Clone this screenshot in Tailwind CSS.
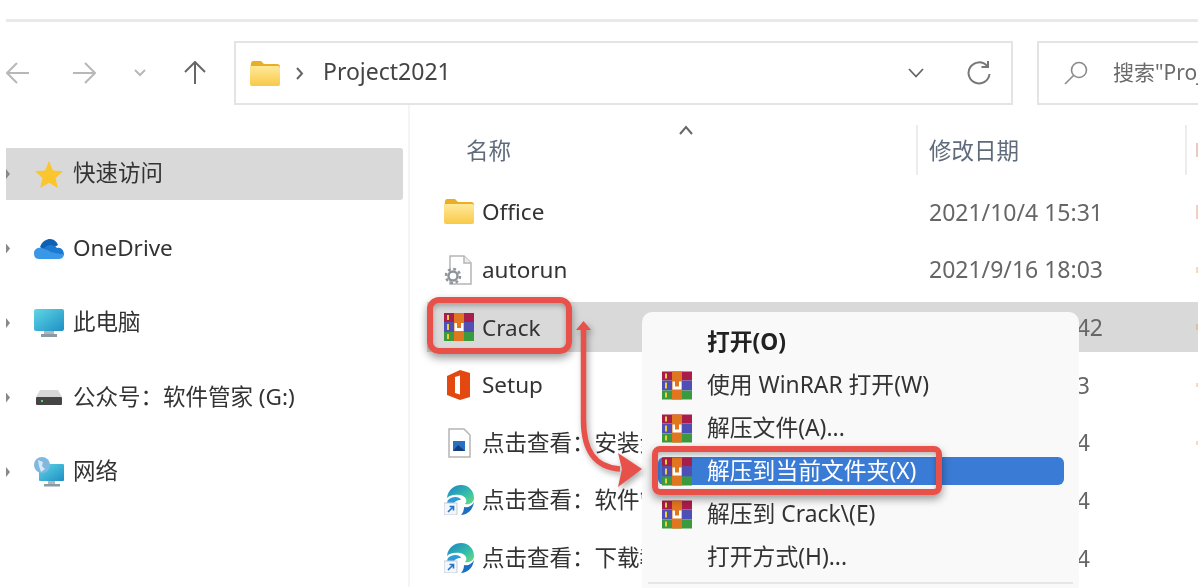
<!DOCTYPE html>
<html lang="zh-CN">
<head>
    <meta charset="UTF-8">
    <title>Project2021</title>
    <script src="https://cdn.jsdelivr.net/npm/@tailwindcss/browser@4"></script>
</head>
<body class="bg-white">
    <!-- shared icons -->
    <svg class="absolute w-0 h-0">
        <defs>
            <linearGradient id="folderFill" x1="0" y1="0" x2="0" y2="1"><stop offset="0" stop-color="#ffe99a"/><stop offset="1" stop-color="#f8c948"/></linearGradient>
            <linearGradient id="screenFill" x1="0" y1="0" x2="1" y2="1"><stop offset="0" stop-color="#5fd6e6"/><stop offset="1" stop-color="#1f8fc4"/></linearGradient>
            <linearGradient id="edgeFill" x1="0" y1="0" x2="1" y2="1"><stop offset="0" stop-color="#1c7fc9"/><stop offset="0.6" stop-color="#35bfa8"/><stop offset="1" stop-color="#6fdc7c"/></linearGradient>
            <symbol id="folder" viewBox="0 0 30 25">
                <path d="M1 2.500Q1 0 3 0H11L14 3H27Q30 3 30 6V10H0Z" fill="#e9ae22"/>
                <rect x="0" y="5" width="30" height="20" rx="2" fill="url(#folderFill)"/>
            </symbol>
            <symbol id="rar" viewBox="0 0 30 28">
                <rect x="0" y="0" width="30" height="9" fill="#a81d4a"/>
                <rect x="0" y="9" width="30" height="10" fill="#4f4fb5"/>
                <rect x="0" y="19" width="30" height="9" fill="#3c9a3e"/>
                <rect x="10" y="0" width="10" height="28" fill="#e0761f"/>
                <rect x="3" y="2" width="2" height="5" fill="#e8d23a"/>
                <rect x="3" y="11" width="2" height="6" fill="#e8d23a"/>
                <rect x="3" y="21" width="2" height="5" fill="#e8d23a"/>
                <path d="M10.500 10H13V15H17V10H19.500V18H10.500Z" fill="#fff"/>
            </symbol>
            <symbol id="edge" viewBox="0 0 30 30">
                <path d="M3 13C4 4 11 0 17 0C25 0 30 6 30 13C30 18 25 20 21 19C24 16 22 11 16 10C9 9 5 11 3 13Z" fill="url(#edgeFill)"/>
                <path d="M30 17C29 25 23 30 17 30C19 28 20 25 20 22C24 23 28 21 30 17Z" fill="#1a6fc0"/>
                <path d="M7 13C11 11 16 12 17 15C13 15 10 17 10 19H3C3 16 4 14 7 13Z" fill="#2f9ad8"/>
                <rect x="0" y="18" width="13" height="12" fill="#f3f6fa" stroke="#c5ccd4"/>
                <path d="M4 27L9 22M5.500 21.500H9.500V25.500" fill="none" stroke="#2374c6" stroke-width="1.600"/>
            </symbol>
        </defs>
    </svg>

    <div class="relative w-[1200px] h-[588px] overflow-hidden bg-white pl-[6px] pr-[2px] pt-[19px] blur-[0.7px] text-[#333] text-[22.500px] font-['Noto_Sans','Noto_Sans_CJK_SC',sans-serif]">
        <div class="h-[3px] bg-[#e9e9e9]"></div>

        <!-- toolbar -->
        <div class="flex items-center h-[64px] mt-[19px]">
            <div class="flex items-center w-[228px] shrink-0 pl-0">
                <svg class="w-[24px] h-[24px] text-[#b8b8b8]" viewBox="0 0 24 24" fill="none" stroke="currentColor" stroke-width="2"><path d="M23 12H1M11 2L1 12L11 22"/></svg>
                <svg class="w-[24px] h-[24px] ml-[42px] text-[#b8b8b8]" viewBox="0 0 24 24" fill="none" stroke="currentColor" stroke-width="2"><path d="M1 12H23M13 2L23 12L13 22"/></svg>
                <svg class="w-[12px] h-[8px] ml-[38px] text-[#b8b8b8]" viewBox="0 0 12 8" fill="none" stroke="currentColor" stroke-width="2"><path d="M1 1L6 6L11 1"/></svg>
                <svg class="w-[24px] h-[24px] ml-[37px] text-[#666]" viewBox="0 0 24 24" fill="none" stroke="currentColor" stroke-width="2"><path d="M12 23V1M2 11L12 1L22 11"/></svg>
            </div>
            <div class="flex items-center w-[779px] h-full border-2 border-[#e4e4e4] pl-[14px] pr-[20px]">
                <svg class="w-[30px] h-[25px]"><use href="#folder"/></svg>
                <svg class="w-[9px] h-[13px] ml-[15px] text-[#666]" viewBox="0 0 9 13" fill="none" stroke="currentColor" stroke-width="2"><path d="M2 1L7 6.500L2 12"/></svg>
                <span class="ml-[19px] -mt-[4px] text-[23px] text-[#444]">Project2021</span>
                <svg class="w-[16px] h-[10px] ml-auto text-[#666]" viewBox="0 0 16 10" fill="none" stroke="currentColor" stroke-width="1.800"><path d="M1 1L8 8.500L15 1"/></svg>
                <svg class="w-[24px] h-[24px] ml-[43px] text-[#777]" viewBox="0 0 24 24" fill="none" stroke="currentColor" stroke-width="2"><path d="M20 5A10.500 10.500 0 1 0 22.500 13"/><path d="M14.500 6H21V0" /></svg>
            </div>
            <div class="flex items-center flex-1 h-full ml-[24px] border-2 border-r-0 border-[#e4e4e4] pl-[25px] overflow-hidden whitespace-nowrap">
                <svg class="w-[24px] h-[24px] shrink-0 text-[#8a8a8a]" viewBox="0 0 24 24" fill="none" stroke="currentColor" stroke-width="1.600"><circle cx="15" cy="9" r="7.500"/><path d="M9.500 14.500L1 23"/></svg>
                <span class="ml-[25px] text-[#6a6a6a] text-[21px]">搜索"Project2021"</span>
            </div>
        </div>

        <!-- body -->
        <div class="flex">
            <!-- sidebar -->
            <nav class="w-[402px] shrink-0 pt-[43px] flex flex-col gap-[22.500px]">
                <div class="flex items-center h-[52px] w-[397px] bg-[#d9d9d9] rounded-r-[3px]">
                    <span class="w-[4px] h-[10px] bg-[#888] [clip-path:polygon(0_0,100%_50%,0_100%)]"></span>
                    <svg class="w-[28px] h-[27px] ml-[25px]" viewBox="0 0 28 27"><path d="M14 0L18 9.500L28 10.300L20.500 17L22.800 27L14 21.700L5.200 27L7.500 17L0 10.300L10 9.500Z" fill="#fbc52d"/></svg>
                    <span class="ml-[10px] -mt-[3px]">快速访问</span>
                </div>
                <div class="flex items-center h-[52px]">
                    <span class="w-[4px] h-[10px] bg-[#888] [clip-path:polygon(0_0,100%_50%,0_100%)]"></span>
                    <svg class="w-[30px] h-[20px] ml-[24px]" viewBox="0 0 30 20"><path d="M6 8C8 2 13 0 16 0C20 0 23 3 24 6L12 13Z" fill="#0f5fb5"/><path d="M5 20C1 20 0 17 0 14C0 10 4 8 8 9L30 16C29 19 27 20 25 20Z" fill="#3a96e6"/><path d="M10 9C14 5 20 5 23 9C27 8 30 11 30 16L17 13Z" fill="#1a7ad0"/></svg>
                    <span class="ml-[9px] -mt-[2px]">OneDrive</span>
                </div>
                <div class="flex items-center h-[52px]">
                    <span class="w-[4px] h-[10px] bg-[#888] [clip-path:polygon(0_0,100%_50%,0_100%)]"></span>
                    <svg class="w-[30px] h-[28px] ml-[24px]" viewBox="0 0 30 28"><rect x="10" y="21" width="10" height="5" fill="#aeb8bf"/><rect x="7" y="25" width="16" height="3" fill="#8b9aa3"/><rect x="0" y="0" width="30" height="22" rx="2" fill="url(#screenFill)"/></svg>
                    <span class="ml-[9px] -mt-[3px]">此电脑</span>
                </div>
                <div class="flex items-center h-[52px]">
                    <span class="w-[4px] h-[10px] bg-[#888] [clip-path:polygon(0_0,100%_50%,0_100%)]"></span>
                    <svg class="w-[26px] h-[15px] ml-[26px]" viewBox="0 0 26 15"><path d="M4 0H22L26 7H0Z" fill="#d8d8d8"/><rect x="0" y="7" width="26" height="8" rx="1" fill="#454545"/><rect x="5" y="10" width="2" height="2" fill="#5fd35f"/></svg>
                    <span class="ml-[11px] -mt-[2px]">公众号：软件管家 (G:)</span>
                </div>
                <div class="flex items-center h-[52px]">
                    <span class="w-[4px] h-[10px] bg-[#888] [clip-path:polygon(0_0,100%_50%,0_100%)]"></span>
                    <svg class="w-[30px] h-[30px] ml-[24px]" viewBox="0 0 30 30"><rect x="5" y="7" width="25" height="17" rx="1" fill="url(#screenFill)"/><rect x="14" y="24" width="7" height="3" fill="#aeb8bf"/><rect x="10" y="27" width="16" height="2.500" fill="#8b9aa3"/><circle cx="8" cy="8" r="8" fill="#7fb8e0"/><path d="M4 3L9 5L8 9L11 12L7 15L5 9Z" fill="#d7e8f3"/></svg>
                    <span class="ml-[9px] -mt-[3px]">网络</span>
                </div>
            </nav>

            <!-- file list -->
            <main class="flex-1 pt-[20px] border-l-2 border-[#f5f5f5]">
                <div class="relative flex items-center h-[50px] text-[#5f6b7a]">
                    <span class="w-[506px] pl-[56px] pt-[2px]">名称</span>
                    <svg class="absolute left-[268px] top-0 w-[16px] h-[10px] text-[#666]" viewBox="0 0 16 10" fill="none" stroke="currentColor" stroke-width="2"><path d="M2 9L8 2L14 9"/></svg>
                    <span class="h-full w-[2px] bg-[#ececec]"></span>
                    <span class="w-[267px] pl-[11px] pt-[2px]">修改日期</span>
                    <span class="h-full w-[2px] bg-[#ececec]"></span>
                    <span class="ml-auto w-[2px] h-[14px] bg-[#d9a79a]/60"></span>
                </div>
                <div class="mt-[8px] flex flex-col">
                    <div class="flex items-center h-[57.700px] pl-[34px]">
                        <svg class="w-[30px] h-[25px]"><use href="#folder"/></svg>
                        <span class="w-[455px] pl-[8px]">Office</span><span class="text-[#666] text-[23px]">2021/10/4 15:31</span>
                        <span class="ml-auto w-[2px] h-[14px] bg-[#e2a090]/50"></span>
                    </div>
                    <div class="flex items-center h-[57.700px] pl-[34px]">
                        <svg class="w-[30px] h-[30px]" viewBox="0 0 30 30"><path d="M6 1H20L27 8V29H6Z" fill="#fff" stroke="#b5b5b5" stroke-width="1.500"/><path d="M20 1V8H27" fill="#eee" stroke="#b5b5b5" stroke-width="1.500"/><circle cx="9" cy="21" r="4.500" fill="#fff" stroke="#8d949b" stroke-width="2.500"/><circle cx="9" cy="21" r="7" fill="none" stroke="#8d949b" stroke-width="2.500" stroke-dasharray="2.800 2.700"/></svg>
                        <span class="w-[455px] pl-[8px]">autorun</span><span class="text-[#666] text-[23px]">2021/9/16 18:03</span>
                        <span class="ml-auto w-[2px] h-[6px] bg-[#eec48a]/60"></span>
                    </div>
                    <div class="flex items-center h-[57.700px] pl-[34px] relative">
                        <span class="absolute left-[17px] right-0 top-[4px] h-[50px] bg-[#d9d9d9]"></span>
                        <svg class="relative w-[30px] h-[28px]"><use href="#rar"/></svg>
                        <span class="relative w-[455px] pl-[8px] pt-[1px]">Crack</span><span class="relative text-[#666] text-[23px]">2021/9/16 18:42</span>
                        <span class="relative ml-auto w-[2px] h-[6px] bg-[#e0b070]/60"></span>
                    </div>
                    <div class="flex items-center h-[57.700px] pl-[34px]">
                        <svg class="w-[30px] h-[30px]" viewBox="0 0 30 30"><path d="M16 0L26 3V27L16 30L3 25V6Z" fill="#e2480f"/><path d="M11 7L16 5.500V24.500L11 23Z" fill="#fff"/></svg>
                        <span class="w-[455px] pl-[8px]">Setup</span><span class="text-[#666] text-[23px]">2021/9/4 18:03</span>
                        <span class="ml-auto w-[2px] h-[4px] bg-[#eec48a]/60"></span>
                    </div>
                    <div class="flex items-center h-[57.700px] pl-[34px]">
                        <svg class="w-[30px] h-[30px]" viewBox="0 0 30 30"><path d="M5 1H20L26 7V29H5Z" fill="#fff" stroke="#b5b5b5" stroke-width="1.500"/><rect x="9" y="13" width="12" height="10" fill="#2a6fc0"/><path d="M9 23L14 17L21 23Z" fill="#123f7c"/></svg>
                        <span class="w-[455px] pl-[8px]">点击查看：安装步骤</span><span class="text-[#666] text-[23px]">2021/9/4 18:04</span>
                        <span class="ml-auto w-[2px] h-[4px] bg-[#eec48a]/60"></span>
                    </div>
                    <div class="flex items-center h-[57.700px] pl-[34px]">
                        <svg class="w-[30px] h-[30px]"><use href="#edge"/></svg>
                        <span class="w-[455px] pl-[8px]">点击查看：软件管家</span><span class="text-[#666] text-[23px]">2021/9/4 18:04</span>
                    </div>
                    <div class="flex items-center h-[57.700px] pl-[34px]">
                        <svg class="w-[30px] h-[30px]"><use href="#edge"/></svg>
                        <span class="w-[455px] pl-[8px]">点击查看：下载教程</span><span class="text-[#666] text-[23px]">2021/9/4 18:04</span>
                    </div>
                </div>
            </main>
        </div>

        <!-- context menu -->
        <div class="absolute left-[642px] top-[312px] w-[437px] h-[290px] bg-[#f9f9f9] rounded-t-[10px] pt-[9px] px-[20px] flex flex-col text-[#333] text-[22.800px]">
            <div class="flex items-center h-[43px] pl-[45px] font-bold text-[#222]">打开(O)</div>
            <div class="flex items-center h-[43px]">
                <svg class="w-[30px] h-[29px]"><use href="#rar"/></svg><span class="ml-[15px]">使用 WinRAR 打开(W)</span>
            </div>
            <div class="flex items-center h-[43px]">
                <svg class="w-[30px] h-[29px]"><use href="#rar"/></svg><span class="ml-[15px]">解压文件(A)...</span>
            </div>
            <div class="relative flex items-center h-[43px] text-white">
                <span class="absolute -left-[4px] top-[7px] h-[28px] w-[406px] bg-[#3a7bd5] rounded-[6px]"></span>
                <svg class="relative w-[30px] h-[29px]"><use href="#rar"/></svg><span class="relative ml-[15px]">解压到当前文件夹(X)</span>
            </div>
            <div class="flex items-center h-[43px]">
                <svg class="w-[30px] h-[29px]"><use href="#rar"/></svg><span class="ml-[15px]">解压到 Crack\(E)</span>
            </div>
            <div class="flex items-center h-[43px] pl-[45px]">打开方式(H)...</div>
            <div class="h-[2px] mt-[3px] -mx-[14px] bg-[#e6e6e6]"></div>
        </div>

        <!-- red annotations -->
        <div class="absolute left-[427px] top-[297px] w-[145px] h-[57px] border-[6px] border-[#e8504a] rounded-[12px] shadow-[0_4px_8px_rgba(0,0,0,0.4),inset_0_3px_5px_rgba(0,0,0,0.25)]"></div>
        <div class="absolute left-[652px] top-[446px] w-[290px] h-[49px] border-[6px] border-[#e8504a] rounded-[8px] shadow-[0_4px_8px_rgba(0,0,0,0.4),inset_0_3px_5px_rgba(0,0,0,0.25)]"></div>
        <svg class="absolute left-[570px] top-[315px] w-[80px] h-[180px] drop-shadow-[2px_3px_3px_rgba(0,0,0,0.35)]" viewBox="0 0 80 180" fill="none">
            <path d="M13.500 12V105C13.500 135 24 152 50 154" stroke="#e8504a" stroke-width="5.500"/>
            <path d="M13.500 6L21 15H6Z" fill="#e8504a"/>
            <path d="M72 154L48 138L52 154L48 172Z" fill="#e8504a"/>
        </svg>
    </div>
</body>
</html>
